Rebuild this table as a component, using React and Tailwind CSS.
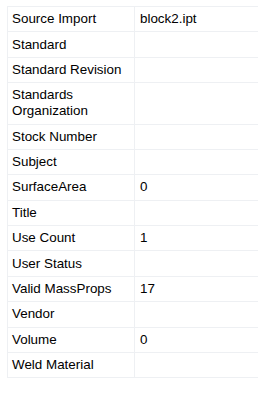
const rows = [
  ["Source Import", "block2.ipt"],
  ["Standard", ""],
  ["Standard Revision", ""],
  ["Standards Organization", ""],
  ["Stock Number", ""],
  ["Subject", ""],
  ["SurfaceArea", "0"],
  ["Title", ""],
  ["Use Count", "1"],
  ["User Status", ""],
  ["Valid MassProps", "17"],
  ["Vendor", ""],
  ["Volume", "0"],
  ["Weld Material", ""],
];

export default function App() {
  return (
    <div className="w-[258px] h-[393px] overflow-hidden bg-white pl-[7px] pt-[6px] font-['Liberation_Sans',Arial,sans-serif] text-[13.4px] text-black">
      <table className="border-collapse w-[320px] table-fixed">
        <tbody>
          {rows.map(([name, value]) => (
            <tr key={name}>
              <td className="w-[127px] border border-[#eef0f3] pl-[4px] pr-[6px] py-[4.2px] leading-[16px] align-top">
                {name}
              </td>
              <td className="border border-[#eef0f3] pl-[5px] py-[4.2px] leading-[16px] align-top">
                {value}
              </td>
            </tr>
          ))}
        </tbody>
      </table>
    </div>
  );
}
